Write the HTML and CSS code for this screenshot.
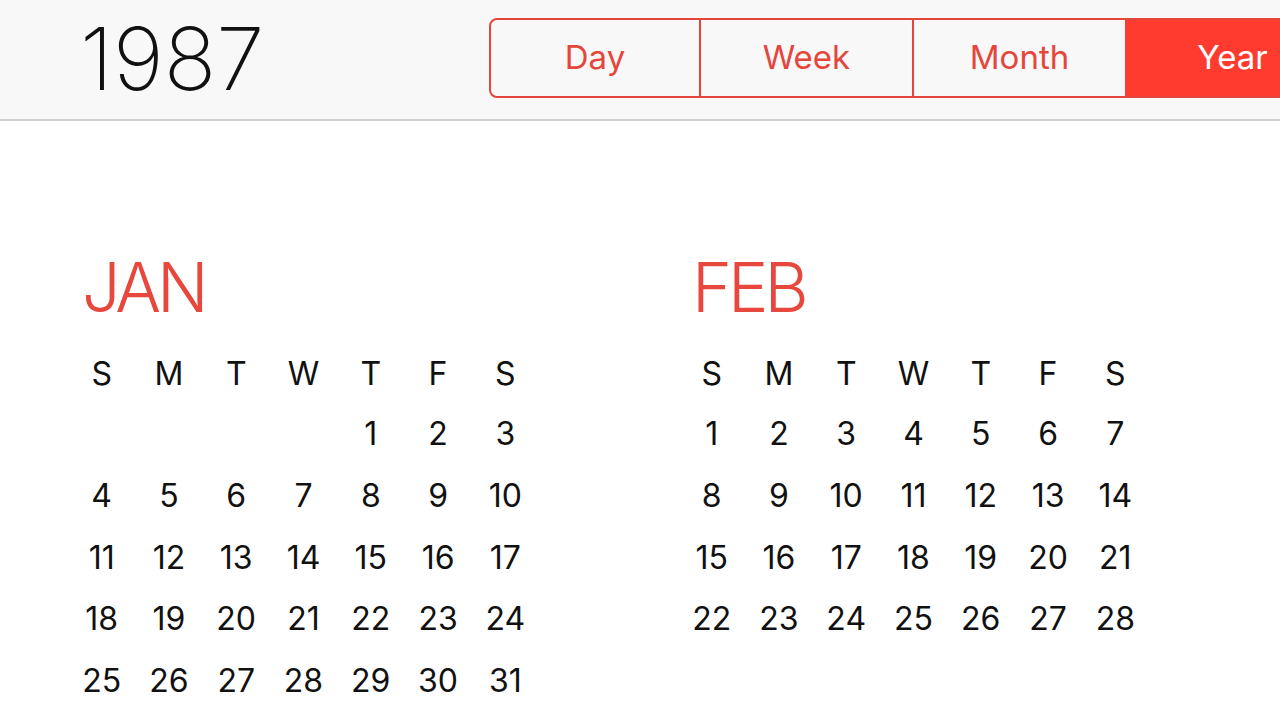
FILE: index.html
```html
<!DOCTYPE html>
<html lang="en">
<head>
<meta charset="utf-8">
<title>1987</title>
<link rel="stylesheet" href="styles.css">
</head>
<body>
<header class="toolbar">
  <h1 class="year-title">1987</h1>
  <nav class="segmented">
    <span class="seg">Day</span>
    <span class="seg">Week</span>
    <span class="seg">Month</span>
    <span class="seg seg-active">Year</span>
  </nav>
</header>
<main class="year-view">
  <section class="month">
    <h2 class="month-name">JAN</h2>
    <div class="grid">
      <span class="dow">S</span><span class="dow">M</span><span class="dow">T</span><span class="dow">W</span><span class="dow">T</span><span class="dow">F</span><span class="dow">S</span>
      <span class="day"></span><span class="day"></span><span class="day"></span><span class="day"></span><span class="day">1</span><span class="day">2</span><span class="day">3</span>
      <span class="day">4</span><span class="day">5</span><span class="day">6</span><span class="day">7</span><span class="day">8</span><span class="day">9</span><span class="day">10</span>
      <span class="day">11</span><span class="day">12</span><span class="day">13</span><span class="day">14</span><span class="day">15</span><span class="day">16</span><span class="day">17</span>
      <span class="day">18</span><span class="day">19</span><span class="day">20</span><span class="day">21</span><span class="day">22</span><span class="day">23</span><span class="day">24</span>
      <span class="day">25</span><span class="day">26</span><span class="day">27</span><span class="day">28</span><span class="day">29</span><span class="day">30</span><span class="day">31</span>
    </div>
  </section>
  <section class="month">
    <h2 class="month-name">FEB</h2>
    <div class="grid">
      <span class="dow">S</span><span class="dow">M</span><span class="dow">T</span><span class="dow">W</span><span class="dow">T</span><span class="dow">F</span><span class="dow">S</span>
      <span class="day">1</span><span class="day">2</span><span class="day">3</span><span class="day">4</span><span class="day">5</span><span class="day">6</span><span class="day">7</span>
      <span class="day">8</span><span class="day">9</span><span class="day">10</span><span class="day">11</span><span class="day">12</span><span class="day">13</span><span class="day">14</span>
      <span class="day">15</span><span class="day">16</span><span class="day">17</span><span class="day">18</span><span class="day">19</span><span class="day">20</span><span class="day">21</span>
      <span class="day">22</span><span class="day">23</span><span class="day">24</span><span class="day">25</span><span class="day">26</span><span class="day">27</span><span class="day">28</span>
    </div>
  </section>
</main>
</body>
</html>
```

FILE: styles.css
```css
* { box-sizing: border-box; }

html, body {
  margin: 0;
  padding: 0;
  background: #ffffff;
  overflow: hidden;
}

body {
  width: 1280px;
  height: 720px;
  font-family: Inter, "Noto Sans", "Liberation Sans", sans-serif;
  color: #111111;
}

.toolbar {
  height: 121px;
  background: #f8f8f8;
  border-bottom: 2px solid #cfcfcf;
  display: flex;
  align-items: center;
  padding-left: 80px;
  padding-bottom: 3px;
  overflow: hidden;
}

.year-title {
  flex: 0 0 409px;
  margin: 0;
  font-size: 87px;
  font-weight: 200;
  line-height: 1;
  color: #111111;
  letter-spacing: 0;
}

.segmented {
  flex: 0 0 auto;
  display: flex;
  height: 80px;
  border: 2px solid #e5463c;
  border-radius: 8px;
  overflow: hidden;
}

.seg {
  width: 213px;
  display: flex;
  align-items: center;
  justify-content: center;
  padding-bottom: 2px;
  font-size: 33px;
  font-weight: 400;
  color: #e5463c;
  border-left: 2px solid #e5463c;
}

.seg:first-child {
  width: 208px;
  border-left: none;
}

.seg-active {
  background: #ff3b30;
  color: #ffffff;
  border-left-color: #ff3b30;
}

.year-view {
  display: flex;
  gap: 139px;
  padding: 132px 0 0 68px;
}

.month {
  width: 471px;
}

.month-name {
  margin: 0 0 22px 0;
  padding-left: 14px;
  font-size: 68px;
  font-weight: 300;
  line-height: 68px;
  letter-spacing: -4px;
  color: #e8473e;
}

.grid {
  display: grid;
  grid-template-columns: repeat(7, 1fr);
  grid-template-rows: 60px repeat(5, 61.7px);
}

.dow, .day {
  display: flex;
  align-items: center;
  justify-content: center;
  font-size: 32px;
  font-weight: 400;
  color: #111111;
}
```
